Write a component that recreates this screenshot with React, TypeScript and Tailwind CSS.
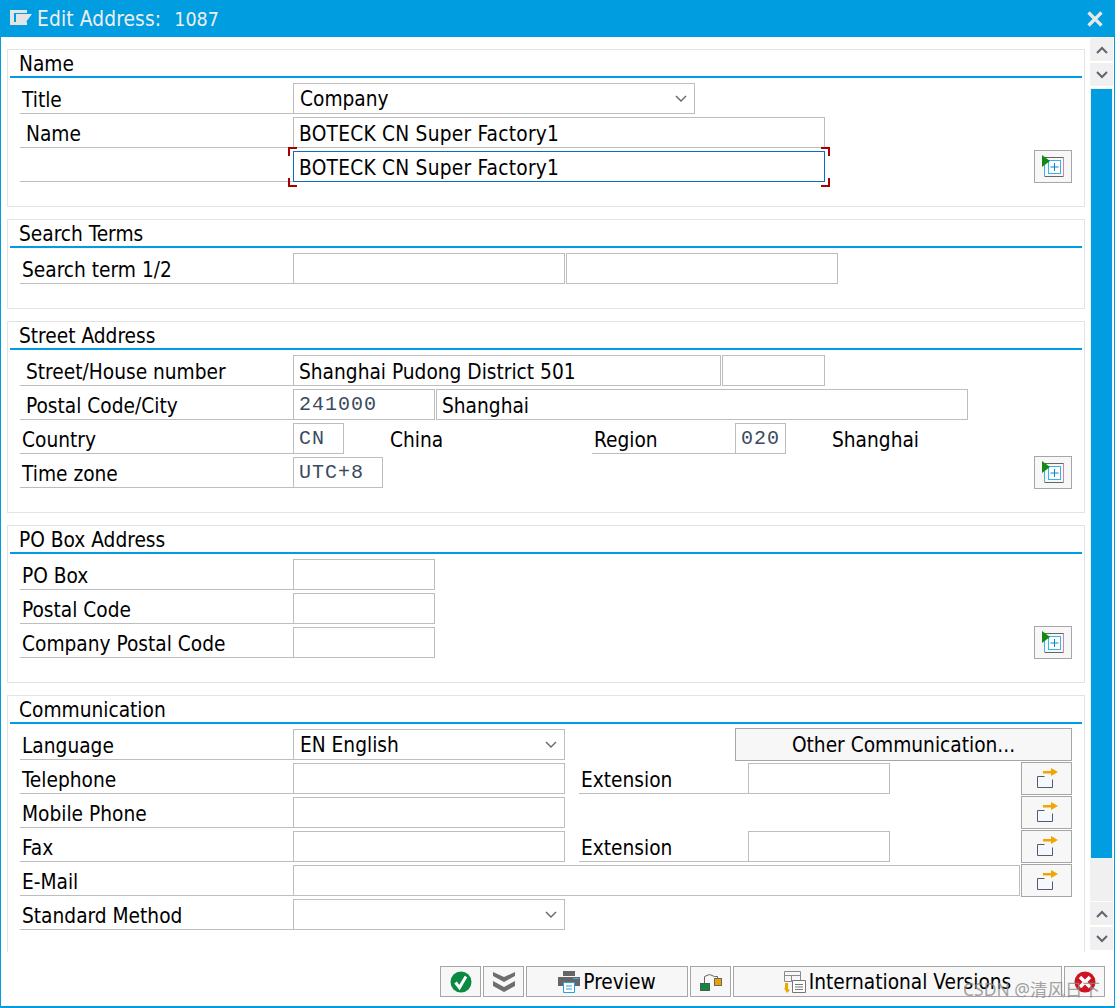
import type { ReactNode } from 'react'

const font = 'font-["DejaVu_Sans_Condensed","Noto_Sans",sans-serif]'

function Chevron() {
  return (
    <svg width="12" height="8" viewBox="0 0 12 8" fill="none" stroke="#666" strokeWidth="1.4">
      <path d="M1 1l5 5 5-5" />
    </svg>
  )
}

function Label({ text, width = 'w-[273px]', indent = false }: { text: string; width?: string; indent?: boolean }) {
  return (
    <div className={`${width} h-[31px] shrink-0 border-b border-[#bdbdbd] flex items-center pt-[6px] text-[20.7px] text-black ${indent ? 'pl-[6px]' : 'pl-[2px]'}`}>
      {text}
    </div>
  )
}

function Field({ value, width, mono = false, focus = false }: { value?: ReactNode; width: string; mono?: boolean; focus?: boolean }) {
  return (
    <div
      className={`${width} h-[31px] shrink-0 border flex items-center pl-[5px] whitespace-nowrap relative ${focus ? 'border-[#0a6ebd]' : 'border-[#bdbdbd]'} ${
        mono ? 'font-["Liberation_Mono",monospace] text-[20px] tracking-[1px] text-[#3a4a60]' : 'pt-[4px] text-[20.7px] text-black'
      }`}
    >
      {value}
      {focus && (
        <>
          <span className="absolute left-[-6px] top-[-5px] w-[9px] h-[9px] border-l-2 border-t-2 border-[#a80000]" />
          <span className="absolute left-[-6px] bottom-[-6px] w-[9px] h-[9px] border-l-2 border-b-2 border-[#a80000]" />
          <span className="absolute right-[-6px] top-[-5px] w-[9px] h-[9px] border-r-2 border-t-2 border-[#a80000]" />
          <span className="absolute right-[-6px] bottom-[-6px] w-[9px] h-[9px] border-r-2 border-b-2 border-[#a80000]" />
        </>
      )}
    </div>
  )
}

function Select({ value, width }: { value?: string; width: string }) {
  return (
    <div className={`${width} h-[31px] shrink-0 border border-[#bdbdbd] flex items-center justify-between pl-[6px] pr-[7px] text-[20.7px] text-black`}>
      <span className="pt-[3px]">{value}</span>
      <Chevron />
    </div>
  )
}

function Row({ children }: { children: ReactNode }) {
  return <div className="flex items-start h-[31px] mb-[3px]">{children}</div>
}

function Section({ title, height, children }: { title: string; height: string; children: ReactNode }) {
  return (
    <div className={`${height} shrink-0 border border-[#e3e3e3] px-[2px] mb-[12px]`}>
      <div className="h-[28px] border-b-2 border-[#009ee0] pl-[9px] text-[20.7px] leading-[29px] text-black">{title}</div>
      <div className="pl-[10px] pr-[10px] pt-[5px]">{children}</div>
    </div>
  )
}

function AddIcon() {
  return (
    <svg width="24" height="24" viewBox="0 0 24 24" fill="none">
      <path d="M3.500 21.500h19v-19h-19" stroke="#666" />
      <path d="M22.500 3v19" stroke="#d08aa0" />
      <path d="M3.500 6v15" stroke="#35b4ee" />
      <rect x="7.500" y="5.500" width="12" height="13" stroke="#35b4ee" fill="#fff" />
      <path d="M13.500 8v8M9.500 12h8" stroke="#0a84c8" />
      <path d="M1 0v12l8-6z" fill="#128a12" />
    </svg>
  )
}

function IconButton() {
  return (
    <button className="ml-auto -mt-px w-[38px] h-[33px] bg-[#f7f7f7] border border-[#a6a6a6] flex items-center justify-center">
      <AddIcon />
    </button>
  )
}

function GoButton() {
  return (
    <button className="ml-auto -mt-px w-[51px] h-[33px] bg-[#f7f7f7] border border-[#a6a6a6] flex items-center justify-center shrink-0">
      <svg width="22" height="21" viewBox="0 0 22 21" fill="none">
        <path d="M1.500 8.500v11h15v-8" stroke="#555a70" />
        <path d="M1.500 8.500h7" stroke="#555a70" />
        <path d="M2.500 9.500h13v9h-13z" fill="#f4f8ff" />
        <path d="M7 3h8V0l7 4-7 4V5.500H7z" fill="#f0a500" />
      </svg>
    </button>
  )
}

function BottomButton({ width, children }: { width: string; children: ReactNode }) {
  return (
    <button className={`${width} h-[31px] shrink-0 bg-[#f7f7f7] border border-[#a6a6a6] flex items-center justify-center text-[20.7px] text-black`}>
      {children}
    </button>
  )
}

function ScrollArrow({ up }: { up?: boolean }) {
  return (
    <div className="h-[23px] shrink-0 bg-[#f0f0f0] flex items-center justify-center mb-[2px]">
      <svg width="12" height="8" viewBox="0 0 12 8" fill="none" stroke="#5f6670" strokeWidth="2">
        <path d={up ? 'M1 7l5-5 5 5' : 'M1 1l5 5 5-5'} />
      </svg>
    </div>
  )
}

export default function App() {
  const company = <span className="tracking-[0.25px]">BOTECK CN Super Factory1</span>

  return (
    <div className={`relative w-[1115px] h-[1008px] bg-white overflow-hidden flex flex-col border-l border-r border-b-2 border-[#009ee0] ${font}`}>
      {/* Title bar */}
      <div className="h-[37px] shrink-0 bg-[#009ee0] flex items-center pl-[9px] pr-[11px] text-[#eeeeee] text-[20.7px]">
        <svg width="22" height="15" viewBox="0 0 22 15" fill="#e4e4e4" className="mr-[5px] -mt-[3px]">
          <path d="M0 0h17v3H4v9h13v3H0z" />
          <path d="M6 4h16l-6 8H6z" />
        </svg>
        <span className="pt-[2px] tracking-[0.15px]">Edit Address:</span>
        <span className="pt-[2px] ml-[13px] text-[19.5px]">1087</span>
        <svg width="16" height="16" viewBox="0 0 16 16" className="ml-auto" stroke="#e8e8e8" strokeWidth="3.200">
          <path d="M1.500 1.500l13 13M14.500 1.500l-13 13" />
        </svg>
      </div>

      <div className="flex flex-1 min-h-0">
        {/* Form */}
        <div className="w-[1084px] shrink-0 pl-[6px] pt-[12px] h-[915px] overflow-hidden flex flex-col">
          <Section title="Name" height="h-[158px]">
            <Row>
              <Label text="Title" />
              <Select value="Company" width="w-[402px]" />
            </Row>
            <Row>
              <Label text="Name" indent />
              <Field value={company} width="w-[532px]" />
            </Row>
            <Row>
              <Label text="" />
              <Field value={company} width="w-[532px]" focus />
              <IconButton />
            </Row>
          </Section>

          <Section title="Search Terms" height="h-[90px]">
            <Row>
              <Label text="Search term 1/2" />
              <Field width="w-[272px]" />
              <div className="w-px" />
              <Field width="w-[272px]" />
            </Row>
          </Section>

          <Section title="Street Address" height="h-[192px]">
            <Row>
              <Label text="Street/House number" indent />
              <Field value="Shanghai Pudong District 501" width="w-[428px]" />
              <div className="w-px" />
              <Field width="w-[103px]" />
            </Row>
            <Row>
              <Label text="Postal Code/City" indent />
              <Field value="241000" width="w-[142px]" mono />
              <div className="w-px" />
              <Field value="Shanghai" width="w-[532px]" />
            </Row>
            <Row>
              <Label text="Country" />
              <Field value="CN" width="w-[51px]" mono />
              <span className="w-[248px] pl-[46px] pt-[4px] h-[31px] flex items-center text-[20.7px] text-black">China</span>
              <Label text="Region" width="w-[143px]" />
              <Field value="020" width="w-[51px]" mono />
              <span className="pl-[46px] pt-[4px] h-[31px] flex items-center text-[20.7px] text-black">Shanghai</span>
            </Row>
            <Row>
              <Label text="Time zone" />
              <Field value="UTC+8" width="w-[90px]" mono />
              <IconButton />
            </Row>
          </Section>

          <Section title="PO Box Address" height="h-[158px]">
            <Row>
              <Label text="PO Box" />
              <Field width="w-[142px]" />
            </Row>
            <Row>
              <Label text="Postal Code" />
              <Field width="w-[142px]" />
            </Row>
            <Row>
              <Label text="Company Postal Code" />
              <Field width="w-[142px]" />
              <IconButton />
            </Row>
          </Section>

          <Section title="Communication" height="h-[280px]">
            <Row>
              <Label text="Language" />
              <Select value="EN English" width="w-[272px]" />
              <button className="ml-auto -mt-px w-[337px] h-[33px] pt-[1px] bg-[#f7f7f7] border border-[#a6a6a6] text-[20.7px] text-black">Other Communication...</button>
            </Row>
            <Row>
              <Label text="Telephone" />
              <Field width="w-[272px]" />
              <div className="w-[14px]" />
              <Label text="Extension" width="w-[169px]" />
              <Field width="w-[142px]" />
              <GoButton />
            </Row>
            <Row>
              <Label text="Mobile Phone" />
              <Field width="w-[272px]" />
              <GoButton />
            </Row>
            <Row>
              <Label text="Fax" />
              <Field width="w-[272px]" />
              <div className="w-[14px]" />
              <Label text="Extension" width="w-[169px]" />
              <Field width="w-[142px]" />
              <GoButton />
            </Row>
            <Row>
              <Label text="E-Mail" />
              <Field width="w-[727px]" />
              <GoButton />
            </Row>
            <Row>
              <Label text="Standard Method" />
              <Select width="w-[272px]" />
            </Row>
          </Section>
        </div>

        {/* Scrollbar */}
        <div className="w-[23px] ml-[5px] shrink-0 h-[915px] pt-px flex flex-col">
          <ScrollArrow up />
          <ScrollArrow />
          <div className="flex-1 bg-[#f0f0f0] px-px pt-px mb-px">
            <div className="h-[769px] bg-[#009ee0]" />
          </div>
          <ScrollArrow up />
          <ScrollArrow />
        </div>
      </div>

      {/* Footer buttons */}
      <div className="absolute left-[439px] top-[966px] flex gap-[2px]">
        <BottomButton width="w-[41px]">
          <svg width="22" height="22" viewBox="0 0 22 22">
            <circle cx="11" cy="11" r="10.500" fill="#0b8a42" />
            <path d="M5.500 11.500l4 5 6.500-11" fill="none" stroke="#fff" strokeWidth="3" />
          </svg>
        </BottomButton>
        <BottomButton width="w-[41px]">
          <svg width="22" height="20" viewBox="0 0 22 20" fill="#6e6e6e">
            <path d="M0 0l11 5 11-5v4L11 10 0 4z" />
            <path d="M0 9l11 6 11-6v5l-11 6L0 14z" />
          </svg>
        </BottomButton>
        <BottomButton width="w-[162px]">
          <svg width="22" height="22" viewBox="0 0 22 22" className="mr-[3px]">
            <path d="M5 0h12v5H5z" fill="#666" />
            <path d="M0 6h22v9H0z" fill="#666" />
            <path d="M15 7h6v1h-6z" fill="#35b4ee" />
            <path d="M5.500 11.500h11v10h-11z" fill="#fff" stroke="#2d9fd9" />
            <path d="M8 15h6M8 18h6" stroke="#2d9fd9" />
          </svg>
          <span className="pt-[3px]">Preview</span>
        </BottomButton>
        <BottomButton width="w-[41px]">
          <svg width="22" height="18" viewBox="0 0 22 18" fill="none">
            <path d="M4.500 10V3.500l5-2 5 2h3V6" stroke="#666" />
            <rect x="0.500" y="10.500" width="9" height="7" fill="#0d8a3e" stroke="#555" />
            <rect x="14.500" y="5.500" width="7" height="7" fill="#eda100" stroke="#666" />
          </svg>
        </BottomButton>
        <BottomButton width="w-[329px]">
          <svg width="22" height="22" viewBox="0 0 22 22" fill="none" className="mr-[3px]">
            <path d="M0.500 0.500h16v10h-16zM0.500 4.500h16M7.500 4.500v6" stroke="#8a8a8a" />
            <path d="M8.500 9.500h13v12h-13z" stroke="#777" fill="#fff" />
            <path d="M11 13.500h8M11 16h8M11 18.500h8" stroke="#777" />
            <path d="M1 12v5l-1 0 3 5 3-3-2-1v-6z" fill="#f0a500" />
          </svg>
          <span className="pt-[3px]">International Versions</span>
        </BottomButton>
        <BottomButton width="w-[41px]">
          <svg width="22" height="22" viewBox="0 0 22 22">
            <circle cx="11" cy="11" r="10.500" fill="#cf1322" />
            <path d="M6 6l10 10M16 6L6 16" stroke="#fff" strokeWidth="3.500" />
          </svg>
        </BottomButton>
      </div>

      {/* Watermark */}
      <span className='absolute left-[962px] top-[976px] text-[17.5px] text-[#8a8a8a]/80 whitespace-nowrap font-["Noto_Sans","Noto_Sans_CJK_SC",sans-serif]'>
        CSDN @清风日下
      </span>
    </div>
  )
}
